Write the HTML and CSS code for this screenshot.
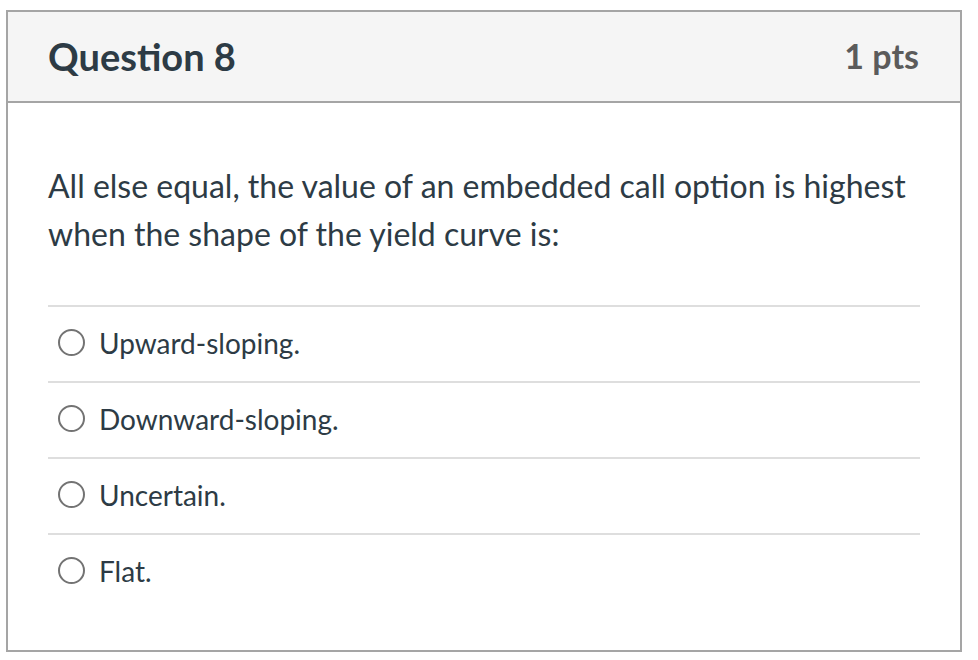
FILE: index.html
```html
<!DOCTYPE html>
<html lang="en">
<head>
<meta charset="utf-8">
<title>Question 8</title>
<link rel="stylesheet" href="styles.css">
</head>
<body>
<div class="card">
  <div class="card-header">
    <h2 class="title">Question 8</h2>
    <span class="pts">1 pts</span>
  </div>
  <div class="card-body">
    <p class="question">All else equal, the value of an embedded call option is highest when the shape of the yield curve is:</p>
    <div class="answers">
      <label class="answer"><span class="radio"></span><span class="answer-text">Upward-sloping.</span></label>
      <label class="answer"><span class="radio"></span><span class="answer-text">Downward-sloping.</span></label>
      <label class="answer"><span class="radio"></span><span class="answer-text">Uncertain.</span></label>
      <label class="answer"><span class="radio"></span><span class="answer-text">Flat.</span></label>
    </div>
  </div>
</div>
</body>
</html>
```
FILE: styles.css
```css
html, body {
  margin: 0;
  padding: 0;
  background: #ffffff;
}
body {
  font-family: Lato, "Liberation Sans", sans-serif;
  color: #2d3b45;
}
.card {
  box-sizing: border-box;
  width: 956px;
  margin: 10px 0 0 6px;
  border: 2px solid #a5a5a5;
}
.card-header {
  box-sizing: border-box;
  height: 91px;
  display: flex;
  align-items: center;
  justify-content: space-between;
  padding: 0 41px 2px 40px;
  background: #f5f5f5;
  border-bottom: 2px solid #a5a5a5;
}
.title {
  margin: 0;
  font-size: 38px;
  font-weight: 700;
  color: #2d3b45;
}
.pts {
  font-size: 34px;
  font-weight: 700;
  color: #5b5b5b;
}
.card-body {
  padding: 59px 40px 41px 40px;
}
.question {
  margin: 0 0 47px 0;
  font-size: 32px;
  line-height: 48px;
}
.answer {
  display: flex;
  align-items: center;
  box-sizing: border-box;
  height: 76px;
  padding-bottom: 3px;
  border-top: 2px solid #dedede;
  padding-left: 10px;
}
.radio {
  box-sizing: border-box;
  width: 27px;
  height: 27px;
  border: 2px solid #737373;
  border-radius: 50%;
  margin-right: 14px;
  flex: none;
}
.answer-text {
  font-size: 28px;
}
```
